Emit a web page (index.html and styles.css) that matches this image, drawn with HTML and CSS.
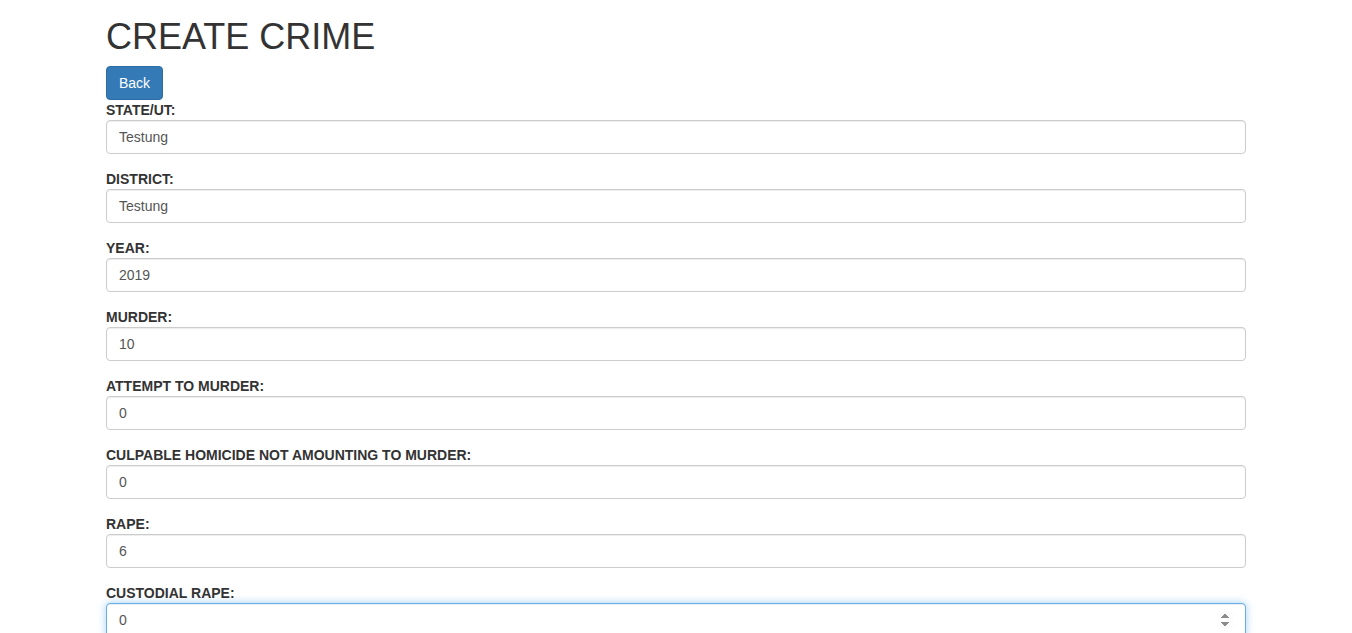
FILE: index.html
```html
<!DOCTYPE html>
<html lang="en">
<head>
<meta charset="utf-8">
<title>Create Crime</title>
<link rel="stylesheet" href="styles.css">
</head>
<body>
<div class="container">
  <h1 class="page-title">CREATE CRIME</h1>
  <a class="btn btn-primary" href="#">Back</a>
  <form class="crime-form">
    <div class="form-group">
      <label class="field-label" for="state">STATE/UT:</label>
      <input class="form-control" id="state" type="text" value="Testung">
    </div>
    <div class="form-group">
      <label class="field-label" for="district">DISTRICT:</label>
      <input class="form-control" id="district" type="text" value="Testung">
    </div>
    <div class="form-group">
      <label class="field-label" for="year">YEAR:</label>
      <input class="form-control" id="year" type="number" value="2019">
    </div>
    <div class="form-group">
      <label class="field-label" for="murder">MURDER:</label>
      <input class="form-control" id="murder" type="number" value="10">
    </div>
    <div class="form-group">
      <label class="field-label" for="attempt">ATTEMPT TO MURDER:</label>
      <input class="form-control" id="attempt" type="number" value="0">
    </div>
    <div class="form-group">
      <label class="field-label" for="culpable">CULPABLE HOMICIDE NOT AMOUNTING TO MURDER:</label>
      <input class="form-control" id="culpable" type="number" value="0">
    </div>
    <div class="form-group">
      <label class="field-label" for="rape">RAPE:</label>
      <input class="form-control" id="rape" type="number" value="6">
    </div>
    <div class="form-group">
      <label class="field-label" for="custodial">CUSTODIAL RAPE:</label>
      <input class="form-control" id="custodial" type="number" value="0">
    </div>
  </form>
</div>
<script src="script.js"></script>
</body>
</html>
```

FILE: styles.css
```css
* { box-sizing: border-box; }
html { scrollbar-width: none; }
html::-webkit-scrollbar { display: none; }
body {
  margin: 0;
  font-family: "Liberation Sans", Arial, Helvetica, sans-serif;
  font-size: 14px;
  line-height: 1.42857143;
  color: #333;
  background: #fff;
}
.container {
  width: 1170px;
  margin: 0 auto;
  padding: 0 15px;
}
.page-title {
  font-size: 36px;
  font-weight: 500;
  line-height: 1.1;
  margin: 16.5px 0 10px;
  color: #333;
}
.btn {
  display: inline-block;
  padding: 6px 12px;
  font-size: 14px;
  line-height: 1.42857143;
  border: 1px solid transparent;
  border-radius: 4px;
  text-decoration: none;
  vertical-align: middle;
}
.btn-primary {
  color: #fff;
  background-color: #337ab7;
  border-color: #2e6da4;
}
.crime-form { margin: 0; }
.form-group { margin-bottom: 15px; }
.field-label {
  display: block;
  font-weight: 700;
  margin: 0;
}
.form-control {
  display: block;
  width: 100%;
  height: 34px;
  padding: 6px 12px;
  font-family: inherit;
  font-size: 14px;
  line-height: 1.42857143;
  color: #555;
  background-color: #fff;
  border: 1px solid #ccc;
  border-radius: 4px;
  box-shadow: inset 0 1px 1px rgba(0,0,0,.075);
  margin: 0;
}
.form-control:focus {
  border-color: #66afe9;
  outline: 0;
  box-shadow: inset 0 1px 1px rgba(0,0,0,.075), 0 0 8px rgba(102,175,233,.6);
}
```

FILE: script.js
```js
var el = document.getElementById('custodial');
el.focus({ preventScroll: true });
window.scrollTo(0, 0);
```
